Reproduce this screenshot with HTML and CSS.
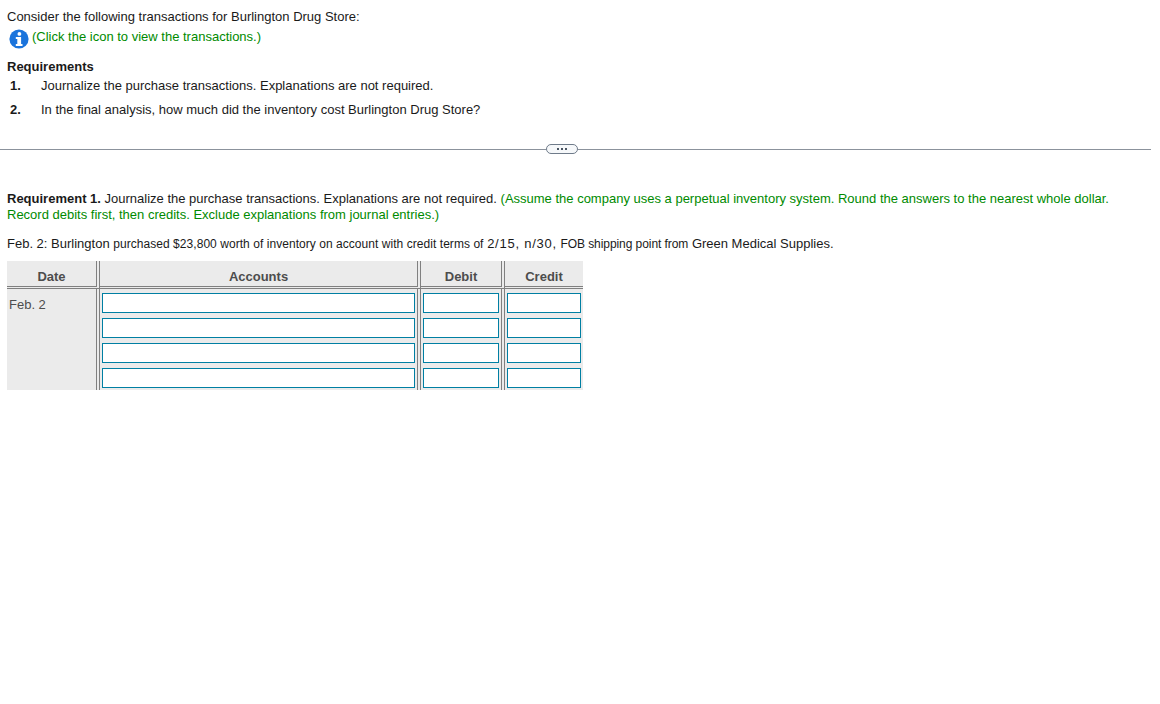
FILE: index.html
```html
<!DOCTYPE html>
<html lang="en">
<head>
    <meta charset="UTF-8">
    <title>Journal Entry</title>
    <link rel="stylesheet" href="styles.css">
</head>
<body>
    <div class="page">
        <section class="intro">
            <p class="intro-title">Consider the following transactions for Burlington Drug Store:</p>
            <p class="intro-link">
                <svg class="info-icon" width="20" height="20" viewBox="0 0 20 20" aria-hidden="true">
                    <circle cx="10" cy="10" r="9.6" fill="#1b74dc"/>
                    <circle cx="10.4" cy="4.9" r="1.9" fill="#fff"/>
                    <path d="M6.8 8h5.3v7h1.4v2H6.8v-2h1.5v-5H6.8z" fill="#fff"/>
                </svg>
                <span class="green">(Click the icon to view the transactions.)</span>
            </p>
            <h2 class="req-title">Requirements</h2>
            <ol class="req-list">
                <li><b>1.</b><span>Journalize the purchase transactions. Explanations are not required.</span></li>
                <li><b>2.</b><span>In the final analysis, how much did the inventory cost Burlington Drug Store?</span></li>
            </ol>
        </section>

        <div class="divider">
            <span class="divider-line divider-left"></span>
            <button class="divider-btn" type="button" aria-label="More"><i></i><i></i><i></i></button>
            <span class="divider-line"></span>
        </div>

        <section class="work">
            <p class="work-title"><b>Requirement 1.</b> Journalize the purchase transactions. Explanations are not required. <span class="green">(Assume the company uses a perpetual inventory system. Round the answers to the nearest whole dollar. Record debits first, then credits. Exclude explanations from journal entries.)</span></p>
            <p class="work-event">Feb. 2: Burlington <span class="tight">purchased $23,800 worth of inventory on account with credit terms of</span> <span class="wide">2/15, n/30,</span> <span class="tight-end">FOB shipping point from</span> Green Medical Supplies.</p>

            <table class="journal">
                <thead>
                    <tr>
                        <th class="col-date">Date</th>
                        <th class="col-accounts">Accounts</th>
                        <th class="col-debit">Debit</th>
                        <th class="col-credit">Credit</th>
                    </tr>
                </thead>
                <tbody>
                    <tr class="first-row">
                        <td class="date-cell" rowspan="4">Feb. 2</td>
                        <td class="col-accounts"><input type="text"></td>
                        <td class="col-debit"><input type="text"></td>
                        <td class="col-credit"><input type="text"></td>
                    </tr>
                    <tr>
                        <td class="col-accounts"><input type="text"></td>
                        <td class="col-debit"><input type="text"></td>
                        <td class="col-credit"><input type="text"></td>
                    </tr>
                    <tr>
                        <td class="col-accounts"><input type="text"></td>
                        <td class="col-debit"><input type="text"></td>
                        <td class="col-credit"><input type="text"></td>
                    </tr>
                    <tr>
                        <td class="col-accounts"><input type="text"></td>
                        <td class="col-debit"><input type="text"></td>
                        <td class="col-credit"><input type="text"></td>
                    </tr>
                </tbody>
            </table>
        </section>
    </div>
</body>
</html>
```

FILE: styles.css
```css
body {
    font-family: "Liberation Sans", Arial, sans-serif;
    font-size: 13px;
    line-height: 16px;
    margin: 0;
    background-color: #fff;
    color: #1a1a1a;
}
p {
    margin: 0;
}
.page {
    width: 1151px;
}
.green {
    color: #008a00;
}
.intro {
    padding: 9px 7px 0;
}
.intro-link {
    display: flex;
    align-items: flex-start;
    gap: 3px;
    height: 24px;
    margin-top: 4px;
    padding-left: 2px;
}
.info-icon {
    flex-shrink: 0;
    margin-top: 0;
}
.req-title {
    font-size: 13px;
    line-height: 16px;
    margin: 6px 0 0;
}
.req-list {
    list-style: none;
    margin: 3px 0 0;
    padding: 0;
}
.req-list li {
    display: flex;
    height: 24px;
    padding-left: 3px;
}
.req-list b {
    width: 31px;
}
.divider {
    display: flex;
    align-items: center;
    height: 10px;
    margin-top: 18px;
}
.divider-line {
    flex: 1;
    height: 1px;
    background-color: #8b929c;
}
.divider-left {
    flex: none;
    width: 546px;
}
.divider-btn {
    display: flex;
    align-items: center;
    justify-content: center;
    gap: 2px;
    width: 32px;
    height: 10px;
    padding: 0;
    background-color: #f6f8fa;
    border: 1px solid #6f7b8a;
    border-radius: 5px;
}
.divider-btn i {
    width: 2px;
    height: 2px;
    background-color: #4a5563;
}
.work {
    padding: 37px 7px 0;
}
.work-event {
    margin-top: 13px;
}
.tight {
    font-size: 12px;
    letter-spacing: 0.05px;
}
.tight-end {
    font-size: 12px;
    letter-spacing: -0.07px;
}
.wide {
    letter-spacing: 0.75px;
}
.journal {
    border-collapse: separate;
    border-spacing: 0;
    margin-top: 9px;
    width: 576px;
    table-layout: fixed;
    background-color: #ebebeb;
    color: #4d4d4d;
}
.journal th {
    height: 18px;
    padding: 7px 0 0;
    font-size: 13px;
    text-align: center;
    vertical-align: middle;
    border-bottom: 3px double #808080;
    box-sizing: content-box;
}
.journal td {
    padding: 3px 2px 2px;
    height: 20px;
}
.journal .first-row td {
    padding-top: 4px;
}
.journal .first-row .date-cell {
    padding: 8px 2px 0;
    vertical-align: top;
}
.col-date {
    width: 89px;
}
.journal .col-date,
.journal .date-cell,
.journal .col-accounts,
.journal .col-debit {
    border-right: 4px double #808080;
}
.col-accounts {
    width: 317px;
}
.col-debit {
    width: 80px;
}
.journal input {
    display: block;
    box-sizing: border-box;
    width: 100%;
    height: 20px;
    margin: 0;
    padding: 0 3px;
    background-color: #fff;
    border: 1px solid #007fa3;
    border-radius: 0;
    outline: none;
}
```
